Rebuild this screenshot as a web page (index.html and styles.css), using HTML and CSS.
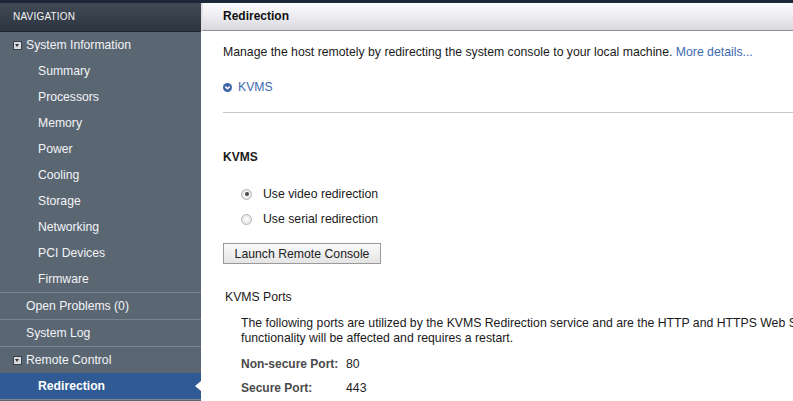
FILE: index.html
```html
<!DOCTYPE html>
<html>
<head>
<meta charset="utf-8">
<link rel="stylesheet" href="styles.css">
</head>
<body>
<div class="topbar"></div>
<div class="app">
  <nav class="sidebar">
    <div class="nav-head">NAVIGATION</div>
    <div class="group">
      <div class="item top"><span class="tog"></span>System Information</div>
      <div class="item sub">Summary</div>
      <div class="item sub">Processors</div>
      <div class="item sub">Memory</div>
      <div class="item sub">Power</div>
      <div class="item sub">Cooling</div>
      <div class="item sub">Storage</div>
      <div class="item sub">Networking</div>
      <div class="item sub">PCI Devices</div>
      <div class="item sub">Firmware</div>
    </div>
    <div class="group">
      <div class="item top plain">Open Problems (0)</div>
    </div>
    <div class="group">
      <div class="item top plain">System Log</div>
    </div>
    <div class="group">
      <div class="item top"><span class="tog"></span>Remote Control</div>
      <div class="item sub sel">Redirection<span class="pointer"></span></div>
    </div>
  </nav>
  <main class="main">
    <div class="main-head">Redirection</div>
    <div class="content">
      <p class="intro">Manage the host remotely by redirecting the system console to your local machine. <a class="link">More details...</a></p>
      <div class="toc"><span class="chev"><svg width="9" height="9" viewBox="0 0 9 9"><circle cx="4.5" cy="4.5" r="4.5" fill="#3d64a8"/><path d="M2.3 3.6 L4.5 5.8 L6.7 3.6" stroke="#fff" stroke-width="1.5" fill="none"/></svg></span><a class="link">KVMS</a></div>
      <hr class="rule">
      <h2 class="sec">KVMS</h2>
      <div class="radios">
        <label class="radio"><span class="rb on"></span>Use video redirection</label>
        <label class="radio"><span class="rb"></span>Use serial redirection</label>
      </div>
      <button class="btn">Launch Remote Console</button>
      <h3 class="sub-sec">KVMS Ports</h3>
      <div class="ports">
        <p class="desc">The following ports are utilized by the KVMS Redirection service and are the HTTP and HTTPS Web Server ports. If these ports are changed, the KVMS Redirection functionality will be affected and requires a restart.</p>
        <div class="kv"><span class="k">Non-secure Port:</span><span class="v">80</span></div>
        <div class="kv"><span class="k">Secure Port:</span><span class="v">443</span></div>
      </div>
    </div>
  </main>
</div>
</body>
</html>
```
FILE: styles.css
```css
* { box-sizing: border-box; }
html, body { margin: 0; padding: 0; height: 100%; overflow: hidden; }
body { font-family: "Liberation Sans", Arial, sans-serif; font-size: 12.25px; color: #1a1a1a; background: #fff; }
.topbar { height: 3px; background: #1c2738; }
.app { display: flex; height: calc(100% - 3px); }
.sidebar { width: 201px; flex: none; background: #5b6673; color: #f2f4f6; font-size: 12.2px; }
.nav-head { height: 29px; padding-left: 13px; font-size: 10px; line-height: 27px; color: #f4f4f4; letter-spacing: 0.2px;
  background: linear-gradient(#414a56, #2d353f); border-bottom: 1px solid #1f252c; }
.group { border-bottom: 1px solid #7c8591; }
.item { height: 26px; line-height: 26px; white-space: nowrap; position: relative; }
.item.top { padding-left: 13px; display: flex; align-items: center; }
.item.top.plain { padding-left: 26px; }
.item.sub { padding-left: 38px; }
.tog { width: 9px; height: 9px; margin-right: 4px; background: #d8dadd; border: 1px solid #3a424c; position: relative; }
.tog::after { content: ""; position: absolute; left: 1px; top: 2px; border-left: 2.5px solid transparent; border-right: 2.5px solid transparent; border-top: 3px solid #333; }
.sel { background: #2f5a93; font-weight: bold; color: #fff; padding-left: 37px; }
.pointer { position: absolute; right: 0; top: 8px; border-top: 5px solid transparent; border-bottom: 5px solid transparent; border-right: 6px solid #fff; }
.main { flex: 1; min-width: 0; overflow: hidden; }
.main-head { height: 28px; padding-left: 20px; line-height: 27px; font-weight: bold; font-size: 12px; color: #111;
  background: linear-gradient(#fbfbfd, #f0f0f4 40%, #d9d9dd); border-bottom: 1px solid #8f8f8f; border-left: 2px solid #e0e0e4; }
.content { padding-left: 22px; }
.intro { margin: 13px 0 0; line-height: 16px; white-space: nowrap; }
.link { color: #3e6bb0; }
.toc { margin-top: 19px; display: flex; align-items: center; line-height: 16px; }
.chev { display: flex; margin-right: 6px; }
.rule { border: 0; border-top: 1px solid #c4c4c4; margin: 17px 0 0; height: 0; }
.sec { font-size: 12px; font-weight: bold; margin: 36px 0 0; line-height: 16px; }
.radios { margin-top: 21px; padding-left: 18px; display: flex; flex-direction: column; gap: 9px; }
.radio { display: flex; align-items: center; line-height: 16px; }
.rb { width: 11px; height: 11px; border-radius: 50%; margin-right: 11px; border: 1px solid #b4b4b4; background: radial-gradient(#ffffff, #dcdcdc); position: relative; }
.rb.on::after { content: ""; position: absolute; left: 2.5px; top: 2.5px; width: 4px; height: 4px; border-radius: 50%; background: #4a4a4a; }
.btn { margin-top: 16px; height: 21px; width: 158px; padding: 0; font-family: inherit; font-size: 12.25px; color: #222;
  border: 1px solid #9a9a9a; background: linear-gradient(#fafafa, #e4e4e4); border-radius: 0; }
.sub-sec { font-size: 12.25px; font-weight: normal; margin: 25px 0 0 2px; line-height: 16px; }
.ports { padding-left: 18px; }
.desc { margin: 11px 0 0; line-height: 15px; width: 905px; }
.kv { display: flex; margin-top: 10px; line-height: 16px; }
.kv + .kv { margin-top: 8px; }
.k { width: 105px; font-weight: bold; color: #4a4a4a; font-size: 12px; }
.v { color: #222; }
```
